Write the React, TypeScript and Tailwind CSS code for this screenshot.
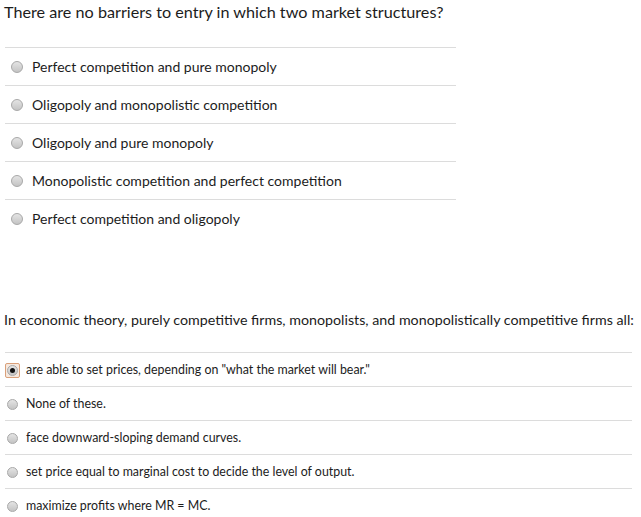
const q1 = [
  "Perfect competition and pure monopoly",
  "Oligopoly and monopolistic competition",
  "Oligopoly and pure monopoly",
  "Monopolistic competition and perfect competition",
  "Perfect competition and oligopoly",
];

const q2 = [
  'are able to set prices, depending on "what the market will bear."',
  "None of these.",
  "face downward-sloping demand curves.",
  "set price equal to marginal cost to decide the level of output.",
  "maximize profits where MR = MC.",
];

function Radio({ size, checked }: { size: number; checked?: boolean }) {
  return (
    <span
      className="flex items-center justify-center rounded-full border border-[#a8a8a8] bg-gradient-to-b from-[#e4e4e4] to-[#c4c4c4] shrink-0"
      style={{ width: size, height: size }}
    >
      {checked && <span className="w-[5px] h-[5px] rounded-full bg-[#111]" />}
    </span>
  );
}

export default function App() {
  return (
    <div className="w-[641px] h-[517px] bg-white text-[#1c1c1c] overflow-hidden" style={{ fontFamily: "Lato, 'Open Sans', sans-serif" }}>
      <div className="pl-[4px] pt-[2px] text-[16.2px] leading-[20px]">There are no barriers to entry in which two market structures?</div>
      <div className="ml-[5px] w-[451px] mt-[25px]">
        {q1.map((t) => (
          <div key={t} className="h-[38px] flex items-center border-t border-[#dcdcdc] text-[14px]">
            <span className="ml-[6px] mr-[9px]"><Radio size={12} /></span>
            <span>{t}</span>
          </div>
        ))}
      </div>

      <div className="pl-[4px] mt-[73px] text-[14.25px] leading-[20px]">
        In economic theory, purely competitive firms, monopolists, and monopolistically competitive firms all:
      </div>
      <div className="ml-[5px] w-[627px] mt-[22px]">
        {q2.map((t, i) => (
          <div key={t} className="h-[34px] pt-[2px] flex items-center border-t border-[#dcdcdc] text-[12.4px]">
            {i === 0 ? (
              <span className="w-[15px] h-[15px] flex items-center justify-center border border-[#d9a07a] rounded-[2px] mr-[6px] bg-[#f6e9df]">
                <Radio size={11} checked />
              </span>
            ) : (
              <span className="ml-[2px] mr-[8px]"><Radio size={11} /></span>
            )}
            <span>{t}</span>
          </div>
        ))}
      </div>
    </div>
  );
}
